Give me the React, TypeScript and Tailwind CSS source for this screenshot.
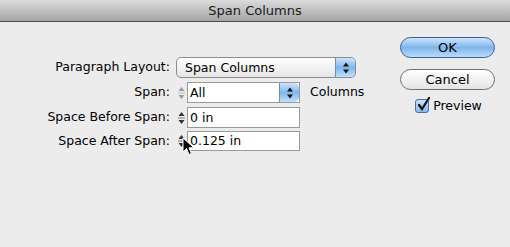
import React from "react"

function Stepper({ dim }: { dim?: boolean }) {
  const c = dim ? "#9a9a9a" : "#333"
  return (
    <div className="w-[11px] h-[20px] flex items-center justify-center">
      <svg width="9" height="16" viewBox="0 0 9 16">
        <path d="M4.5 2 L7.5 6 L1.5 6 Z" fill={c} />
        <rect x="1" y="7.5" width="7" height="1" fill={dim ? "#bbb" : "#777"} />
        <path d="M4.5 14 L7.5 10 L1.5 10 Z" fill={c} />
      </svg>
    </div>
  )
}

function BlueArrows() {
  return (
    <div className="w-[20px] self-stretch rounded-r-[5px] bg-gradient-to-b from-[#cfe4fb] via-[#80b6ee] to-[#bfe0ff] border-l border-[#6f8fb8] flex items-center justify-center">
      <svg width="8" height="14" viewBox="0 0 8 14">
        <path d="M4 1.5 L7 5.5 L1 5.5 Z" fill="#111" />
        <path d="M4 12.5 L7 8.5 L1 8.5 Z" fill="#111" />
      </svg>
    </div>
  )
}

export default function App() {
  return (
    <div
      className="w-[510px] h-[247px] bg-[#ececec] relative overflow-hidden text-[12.5px] text-black"
      style={{ fontFamily: '"DejaVu Sans", "Noto Sans", sans-serif' }}
    >
      <div className="h-[22px] bg-gradient-to-b from-[#dcdcdc] to-[#a4a4a4] border-b border-[#4e4e4e] flex items-center justify-center text-[13px] text-[#1a1a1a]">
        Span Columns
      </div>

      <div className="flex">
        <div className="pt-[35px] pl-[20px]">
          <div className="grid grid-cols-[150px_auto] gap-x-[6px] items-center">
            <div className="text-right">Paragraph Layout:</div>
            <div className="flex h-[21px] w-[180px] border border-[#8c8c8c] rounded-[5px] bg-gradient-to-b from-white to-[#e6e6e6] overflow-hidden">
              <div className="flex-1 pl-[8px] leading-[19px]">Span Columns</div>
              <BlueArrows />
            </div>

            <div className="text-right mt-[4px]">Span:</div>
            <div className="flex items-center mt-[4px]">
              <Stepper dim />
              <div className="flex h-[21px] w-[113px] border border-[#9a9a9a] bg-white">
                <div className="flex-1 pl-[2px] leading-[19px]">All</div>
                <BlueArrows />
              </div>
              <div className="ml-[10px]">Columns</div>
            </div>

            <div className="text-right mt-[4px]">Space Before Span:</div>
            <div className="flex items-center mt-[4px]">
              <Stepper />
              <div className="h-[21px] w-[113px] border border-[#9a9a9a] bg-white pl-[2px] leading-[19px]">0 in</div>
            </div>

            <div className="text-right mt-[3px]">Space After Span:</div>
            <div className="flex items-center mt-[3px]">
              <Stepper />
              <div className="h-[20px] w-[113px] border border-[#9a9a9a] bg-white pl-[2px] leading-[18px]">0.125 in</div>
            </div>
          </div>
        </div>

        <div className="ml-auto mr-[15px] pt-[15px] flex flex-col items-center w-[95px]">
          <div className="w-[95px] h-[21px] rounded-full border border-[#3d5f8f] bg-gradient-to-b from-[#cfe6fd] via-[#7fb5ec] to-[#b9dcfb] flex items-center justify-center text-[13px]">
            OK
          </div>
          <div className="mt-[11px] w-[95px] h-[21px] rounded-full border border-[#707070] bg-gradient-to-b from-white to-[#e4e4e4] flex items-center justify-center text-[13px]">
            Cancel
          </div>
          <div className="mt-[7px] flex items-center ml-[2px]">
            <div className="w-[14px] h-[14px] rounded-[3px] border border-[#4f6f9c] bg-gradient-to-b from-[#cbe3fb] to-[#86b9ee] relative">
              <svg className="absolute -top-[3px] left-[1px]" width="14" height="15" viewBox="0 0 14 15">
                <path d="M2 8 L5 12 L12 1" stroke="#111" strokeWidth="2.2" fill="none" strokeLinecap="round" />
              </svg>
            </div>
            <div className="ml-[4px]">Preview</div>
          </div>
        </div>
      </div>

      <svg className="absolute left-[182px] top-[137px]" width="14" height="20" viewBox="0 0 14 20">
        <path d="M1 1 L1 15 L4.5 11.5 L7 17.5 L9.5 16.5 L7 10.8 L12 10.8 Z" fill="#000" stroke="#fff" strokeWidth="1" />
      </svg>
    </div>
  )
}
